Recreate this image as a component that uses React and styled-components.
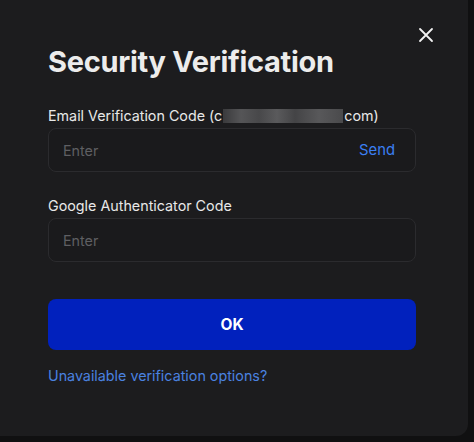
import React from "react";
import styled, { createGlobalStyle } from "styled-components";

const GlobalStyle = createGlobalStyle`
  body {
    margin: 0;
    background: #101011;
    font-family: Inter, "Noto Sans", sans-serif;
  }
`;

export default function App() {
  return (
    <>
      <GlobalStyle />
      <Modal>
        <CloseButton aria-label="Close">
          <svg width="16" height="16" viewBox="0 0 16 16">
            <path
              d="M2 2L14 14M14 2L2 14"
              stroke="#f2f2f2"
              strokeWidth="1.8"
              strokeLinecap="round"
            />
          </svg>
        </CloseButton>
        <Title>Security Verification</Title>
        <Field>
          <Label>
            Email Verification Code (c<Masked />com)
          </Label>
          <InputBox>
            <Input placeholder="Enter" />
            <Action>Send</Action>
          </InputBox>
        </Field>
        <Field>
          <Label>Google Authenticator Code</Label>
          <InputBox>
            <Input placeholder="Enter" />
          </InputBox>
        </Field>
        <OkButton>OK</OkButton>
        <Link>Unavailable verification options?</Link>
      </Modal>
    </>
  );
}

const Modal = styled.div`
  position: relative;
  width: 468px;
  height: 436px;
  box-sizing: border-box;
  background: #1c1c1e;
  border-radius: 0 0 12px 0;
  padding: 44px 52px 0 48px;
  display: flex;
  flex-direction: column;
`;

const CloseButton = styled.button`
  position: absolute;
  top: 27px;
  right: 34px;
  width: 16px;
  height: 16px;
  padding: 0;
  border: none;
  background: none;
  display: flex;
  cursor: pointer;
`;

const Title = styled.h1`
  margin: 0 0 26px;
  font-size: 29px;
  line-height: 36px;
  font-weight: 700;
  color: #ececec;
  letter-spacing: -0.3px;
`;

const Field = styled.div`
  display: flex;
  flex-direction: column;
  gap: 2px;
  margin-bottom: 24px;
`;

const Label = styled.div`
  font-size: 14.3px;
  line-height: 20px;
  color: #e8e8e8;
  display: flex;
  align-items: center;
`;

const Masked = styled.span`
  display: inline-block;
  width: 120px;
  height: 14px;
  margin: 0 1px;
  background: linear-gradient(
    90deg,
    #3a3a3c 0%,
    #555557 15%,
    #48484a 30%,
    #5a5a5c 45%,
    #444446 60%,
    #58585a 80%,
    #4a4a4c 100%
  );
`;

const InputBox = styled.div`
  height: 44px;
  box-sizing: border-box;
  border: 1px solid #2b2b2e;
  border-radius: 8px;
  background: #1a1a1c;
  display: flex;
  align-items: center;
  padding: 0 20px 0 14px;
`;

const Input = styled.input`
  flex: 1;
  min-width: 0;
  border: none;
  outline: none;
  background: transparent;
  font-family: inherit;
  font-size: 14.3px;
  color: #e8e8e8;
  padding: 0;
  &::placeholder {
    color: #5f5f62;
  }
`;

const Action = styled.span`
  font-size: 14.8px;
  color: #3b7ff2;
  cursor: pointer;
`;

const OkButton = styled.button`
  margin-top: 13px;
  height: 51px;
  border: none;
  border-radius: 8px;
  background: #0121bd;
  color: #ffffff;
  font-family: inherit;
  font-size: 15.5px;
  font-weight: 700;
  cursor: pointer;
`;

const Link = styled.a`
  margin-top: 16px;
  font-size: 14.3px;
  line-height: 20px;
  color: #4a82e0;
  cursor: pointer;
`;
